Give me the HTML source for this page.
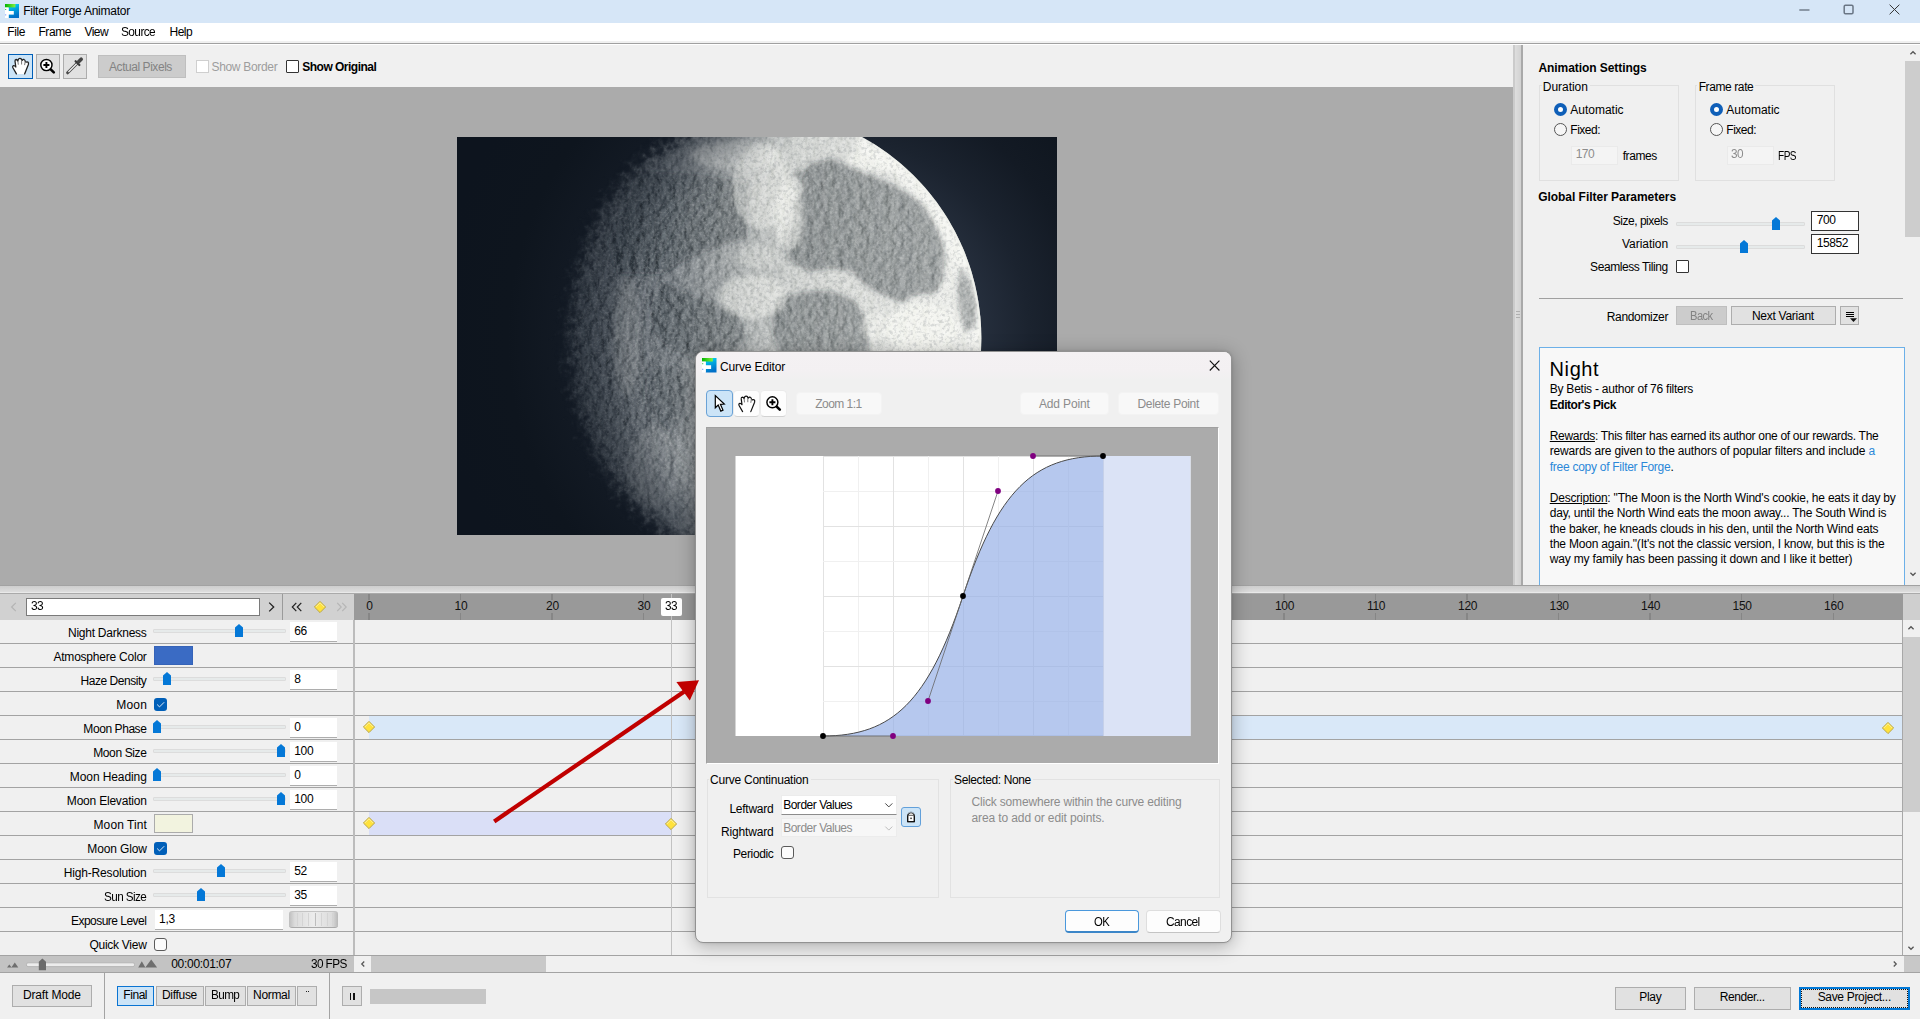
<!DOCTYPE html>
<html>
<head>
<meta charset="utf-8">
<title>Filter Forge Animator</title>
<style>
*{box-sizing:border-box;margin:0;padding:0}
html,body{width:1920px;height:1019px;overflow:hidden;background:#f0f0f0;font-family:"Liberation Sans",sans-serif;font-size:12px;color:#000}
.a{position:absolute}
.t{position:absolute;white-space:nowrap;font-size:12px;color:#000}
svg{display:block;overflow:visible}
</style>
</head>
<body>

<div class="a" style="left:0px;top:0px;width:1920px;height:23px;background:#d6e6f7;"></div>
<svg class="a" style="left:5px;top:4px;" width="14" height="14" viewBox="0 0 14 14"><defs><linearGradient id="iab" x1="0" y1="0" x2="0.3" y2="1"><stop offset="0" stop-color="#00e4ff"/><stop offset="0.45" stop-color="#00a8e0"/><stop offset="1" stop-color="#0070c8"/></linearGradient><linearGradient id="iag" x1="0" y1="0" x2="1" y2="0"><stop offset="0" stop-color="#00b400"/><stop offset="1" stop-color="#86f040"/></linearGradient></defs><rect x="3.6" y="0" width="10.4" height="14" fill="url(#iab)"/><rect x="0" y="0" width="10.4" height="3.4" fill="url(#iag)"/><rect x="0" y="3.6" width="3.6" height="10.4" fill="#fff"/><rect x="0" y="7" width="8.8" height="3.6" fill="#fff"/><rect x="0.2" y="5" width="1" height="1" fill="#30c030"/><rect x="0.2" y="10.4" width="1" height="1" fill="#6080ff"/></svg>
<div class="t" style="left:23.16px;top:4px;line-height:14px;letter-spacing:-0.25px;">Filter Forge Animator</div>
<svg class="a" style="left:1780px;top:0px;" width="140" height="23" viewBox="1780 0 140 23"><path d="M1799.3,10 h10.2" fill="none" stroke="#6a7685" stroke-width="1.4"/><rect x="1844.2" y="5.2" width="8.8" height="8.6" rx="1.2" fill="none" stroke="#6a7685" stroke-width="1.5"/><path d="M1889.6,4.7 l9.8,9.6 M1899.4,4.7 l-9.8,9.6" fill="none" stroke="#333" stroke-width="1"/></svg>
<div class="a" style="left:0px;top:23px;width:1920px;height:18px;background:#fff;"></div>
<div class="a" style="left:0px;top:41px;width:1920px;height:2px;background:#f0f0f0;"></div>
<div class="a" style="left:0px;top:43px;width:1920px;height:1px;background:#a0a0a0;"></div>
<div class="a" style="left:0px;top:44px;width:1920px;height:1px;background:#fff;"></div>
<div class="t" style="left:7.26px;top:24.7px;line-height:14px;letter-spacing:-0.41px;">File</div>
<div class="t" style="left:38.46px;top:24.7px;line-height:14px;letter-spacing:-0.44px;">Frame</div>
<div class="t" style="left:84.46px;top:24.7px;line-height:14px;letter-spacing:-0.53px;">View</div>
<div class="t" style="left:121.46px;top:24.7px;line-height:14px;letter-spacing:-0.6px;transform:scaleX(0.991);transform-origin:0 0;">Source</div>
<div class="t" style="left:169.46px;top:24.7px;line-height:14px;letter-spacing:-0.49px;">Help</div>
<div class="a" style="left:0px;top:45px;width:1513px;height:42px;background:#f0f0f0;"></div>
<div class="a" style="left:8px;top:54px;width:25px;height:25px;background:#cce4f7;border:1px solid #005fb8;"></div>
<div class="a" style="left:36px;top:54px;width:24px;height:25px;background:#e1e1e1;border:1px solid #adadad;"></div>
<div class="a" style="left:63px;top:54px;width:24px;height:25px;background:#e1e1e1;border:1px solid #adadad;"></div>
<svg class="a" style="left:0px;top:44px;" width="100" height="43" viewBox="0 44 100 43"><path d="M16.4,73.9 l-3.5,-6.1 q-0.7,-1.8 0.7,-2.2 q1.3,-0.2 2.2,1.4 l-0.8,-5.8 q-0.1,-1.6 1.2,-1.7 q1.3,0 1.6,1.5 l0.4,-1.2 q0.4,-1.5 1.8,-1.4 q1.5,0.1 1.6,1.6 l0.6,0.4 q0.6,-1.2 1.8,-0.9 q1.3,0.4 1.2,1.9 l0.8,0.8 q1,-0.7 1.9,-0.1 q1,0.8 0.5,2.4 l-3.8,9.4" fill="#fff" stroke="#222" stroke-width="1.3" stroke-linejoin="round" stroke-linecap="round"/><path d="M17.9,61.1 l0.4,3.6 M21.6,60.1 l0,4.4 M25.2,61.5 l-0.6,3.6" fill="none" stroke="#777" stroke-width="1"/><circle cx="46.4" cy="65" r="5.6" fill="#fff" stroke="#000" stroke-width="1.45"/><path d="M43.4,65 h6 M46.4,62 v6" stroke="#000" stroke-width="1.9" fill="none"/><path d="M50.7,69.3 l3.1,3.1" stroke="#000" stroke-width="2.6" stroke-linecap="round" fill="none"/><path d="M67.6,72.8 L77.4,63" stroke="#4a4a4a" stroke-width="3" stroke-linecap="round" fill="none"/><path d="M68.8,71.6 L76.8,63.6" stroke="#fff" stroke-width="1.3" stroke-linecap="round" fill="none"/><path d="M75.6,61.2 L79.4,65" stroke="#3a3a3a" stroke-width="2.2" stroke-linecap="round" fill="none"/><path d="M78.6,61.8 L81.2,59.2" stroke="#444" stroke-width="3.6" stroke-linecap="round" fill="none"/></svg>
<div class="a" style="left:98px;top:55px;width:88px;height:23px;background:#cccccc;border:1px solid #bfbfbf;"></div>
<div class="t" style="left:109.06px;top:60px;line-height:14px;color:#838383;letter-spacing:-0.45px;">Actual Pixels</div>
<div class="a" style="left:195.5px;top:60px;width:13px;height:13px;background:#fff;border:1px solid #cfcfcf;"></div>
<div class="t" style="left:211.46px;top:60px;line-height:14px;color:#9d9d9d;letter-spacing:-0.31px;">Show Border</div>
<div class="a" style="left:286px;top:60px;width:13px;height:13px;background:#fff;border:1px solid #333;border-radius:1px;"></div>
<div class="t" style="left:302.26px;top:60px;line-height:14px;font-weight:bold;letter-spacing:-0.51px;">Show Original</div>
<div class="a" style="left:0px;top:87px;width:1513px;height:498px;background:#ababab;"></div>
<svg class="a" style="left:456.5px;top:137px;overflow:hidden;" width="600" height="398" viewBox="0 0 600 398"><defs><clipPath id="mclip"><circle cx="294.8" cy="201.2" r="229.5"/></clipPath><radialGradient id="glow" gradientUnits="userSpaceOnUse" cx="369.8" cy="201.2" r="390"><stop offset="0" stop-color="#273140"/><stop offset="0.40" stop-color="#252e3c"/><stop offset="0.52" stop-color="#1b232f"/><stop offset="0.66" stop-color="#131a24"/><stop offset="0.82" stop-color="#0e151e"/><stop offset="1" stop-color="#0d141e"/></radialGradient><linearGradient id="lit" gradientUnits="userSpaceOnUse" x1="100" y1="0" x2="530" y2="0"><stop offset="0" stop-color="#262d35"/><stop offset="0.12" stop-color="#394047"/><stop offset="0.25" stop-color="#596066"/><stop offset="0.4" stop-color="#8e9394"/><stop offset="0.55" stop-color="#c6c9c6"/><stop offset="0.8" stop-color="#dee0dc"/><stop offset="1" stop-color="#f2f3ee"/></linearGradient><filter id="blur8" x="-30%" y="-30%" width="160%" height="160%"><feGaussianBlur stdDeviation="2.6"/></filter><filter id="blur12" x="-30%" y="-30%" width="160%" height="160%"><feGaussianBlur stdDeviation="10"/></filter><filter id="rag" x="-10%" y="-10%" width="120%" height="120%"><feGaussianBlur stdDeviation="7" result="b"/><feTurbulence type="fractalNoise" baseFrequency="0.14" numOctaves="3" seed="5" result="t"/><feDisplacementMap in="b" in2="t" scale="30" xChannelSelector="R" yChannelSelector="G"/></filter><filter id="texd" x="0" y="0" width="100%" height="100%"><feTurbulence type="fractalNoise" baseFrequency="0.3" numOctaves="3" seed="11"/><feColorMatrix type="matrix" values="0 0 0 0 0.16  0 0 0 0 0.18  0 0 0 0 0.2  2.6 2.6 0 0 -2.45"/></filter><filter id="texl" x="0" y="0" width="100%" height="100%"><feTurbulence type="fractalNoise" baseFrequency="0.4" numOctaves="3" seed="3"/><feColorMatrix type="matrix" values="0 0 0 0 1  0 0 0 0 1  0 0 0 0 0.97  2.6 2.6 0 0 -2.5"/></filter><filter id="bump" x="0" y="0" width="100%" height="100%" color-interpolation-filters="sRGB"><feTurbulence type="fractalNoise" baseFrequency="0.13" numOctaves="4" seed="4" result="n"/><feDiffuseLighting in="n" surfaceScale="2.2" diffuseConstant="1" lighting-color="#ffffff"><feDistantLight azimuth="5" elevation="50"/></feDiffuseLighting></filter><filter id="blur22" x="-20%" y="-20%" width="140%" height="140%"><feGaussianBlur stdDeviation="20"/></filter><mask id="litmask" maskUnits="userSpaceOnUse" x="0" y="0" width="600" height="398"><g filter="url(#rag)" opacity="0.5"><ellipse cx="294.8" cy="201.2" rx="181" ry="216.5" fill="#fff"/><rect x="294.8" y="-60" width="400" height="560" fill="#fff"/></g><g filter="url(#blur22)"><ellipse cx="294.8" cy="201.2" rx="140" ry="184.5" fill="#fff"/><rect x="294.8" y="-60" width="400" height="560" fill="#fff"/></g></mask></defs><rect width="600" height="398" fill="#0d141e"/><rect width="600" height="398" fill="url(#glow)"/><g clip-path="url(#mclip)"><g mask="url(#litmask)"><rect width="600" height="398" fill="url(#lit)"/><path d="M353,27 L375,21 L395,31 L426,43 L449,55 L469,68 L482,94 L488,117 L486,141 L479,156 L457,158 L445,166 L426,158 L410,150 L395,135 L375,131 L352,135 L332,123 L326,109 L332,94 L340,84 L336,70 L346,52 L344,40 Z" fill="#10161c" opacity="0.42" filter="url(#blur8)"/><path d="M324,160 L352,154 L375,154 L398,164 L410,184 L412,207 L408,250 L330,250 L316,195 L313,176 Z" fill="#10161c" opacity="0.4" filter="url(#blur8)"/><path d="M180,34 L230,36 L293,45 L291,101 L259,110 L203,137 L160,137 L151,106 L169,67 Z" fill="#10161c" opacity="0.36" filter="url(#blur8)"/><path d="M205,144 L241,160 L282,176 L290,203 L275,221 L240,222 L214,214 L196,196 L192,168 Z" fill="#10161c" opacity="0.32" filter="url(#blur8)"/><path d="M188,234 L219,227 L234,250 L230,281 L211,297 L188,273 Z" fill="#10161c" opacity="0.22" filter="url(#blur8)"/><path d="M336,34 l9,-3 l5,6 l-6,5 l-8,-3 z" fill="#10161c" opacity="0.3" filter="url(#blur8)"/><ellipse cx="332" cy="80" rx="14" ry="34" fill="#f3f4ee" opacity="0.55" filter="url(#blur8)"/><ellipse cx="296" cy="160" rx="34" ry="22" fill="#f3f4ee" opacity="0.5" filter="url(#blur8)"/><ellipse cx="465" cy="192" rx="36" ry="26" fill="#f3f4ee" opacity="0.9" filter="url(#blur8)"/><ellipse cx="420" cy="190" rx="16" ry="14" fill="#f3f4ee" opacity="0.5" filter="url(#blur8)"/><ellipse cx="300" cy="120" rx="20" ry="12" fill="#f3f4ee" opacity="0.3" filter="url(#blur8)"/><ellipse cx="425" cy="22" rx="34" ry="12" fill="#f3f4ee" opacity="0.8" filter="url(#blur8)"/><ellipse cx="280" cy="18" rx="46" ry="14" fill="#f3f4ee" opacity="0.5" filter="url(#blur8)"/><ellipse cx="305" cy="50" rx="30" ry="42" fill="#f3f4ee" opacity="0.45" filter="url(#blur8)"/><ellipse cx="170" cy="200" rx="14" ry="60" fill="#f3f4ee" opacity="0.14" filter="url(#blur8)"/><ellipse cx="200" cy="330" rx="30" ry="40" fill="#f3f4ee" opacity="0.12" filter="url(#blur8)"/><path d="M399.73,3.86 A223.5,223.5 0 0 1 509.64,262.8" fill="none" stroke="#f6f7f2" stroke-width="13" opacity="0.8" filter="url(#blur8)"/><path d="M504,129 L514,145 L520,168 L518,191 L508,195 L502,172 L500,148 Z" fill="#10161c" opacity="0.36" filter="url(#blur8)"/><rect width="600" height="398" filter="url(#bump)" style="mix-blend-mode:soft-light" opacity="0.8"/><rect width="600" height="398" filter="url(#texd)" opacity="0.22"/><rect width="600" height="398" filter="url(#texl)" opacity="0.14"/></g></g><path d="M415.89,7.42 A228.5,228.5 0 0 1 518.31,248.71" fill="none" stroke="#f2f3ee" stroke-width="2.2" opacity="0.75"/></svg>
<div class="a" style="left:1513px;top:45px;width:1.5px;height:540px;background:#cbcbcb;"></div>
<div class="a" style="left:1514.5px;top:45px;width:6.5px;height:540px;background:linear-gradient(90deg,#dedede,#d2d2d2);"></div>
<div class="a" style="left:1521px;top:45px;width:2px;height:540px;background:#a9a9a9;"></div>
<div class="a" style="left:1516px;top:311px;width:4px;height:1px;background:#b0b0b0;"></div>
<div class="a" style="left:1516px;top:314px;width:4px;height:1px;background:#b0b0b0;"></div>
<div class="a" style="left:1516px;top:317px;width:4px;height:1px;background:#b0b0b0;"></div>
<div class="a" style="left:1523px;top:45px;width:397px;height:540px;background:#f0f0f0;"></div>
<div class="a" style="left:1905px;top:45px;width:15px;height:540px;background:#f0f0f0;"></div>
<div class="a" style="left:1905px;top:61px;width:15px;height:176px;background:#cdcdcd;"></div>
<svg class="a" style="left:1904.5px;top:45px;" width="16" height="16" viewBox="1904.5 45 16 16"><path d="M1909.9,54.3 l2.6,-2.6 l2.6,2.6" fill="none" stroke="#555" stroke-width="1.25"/></svg>
<svg class="a" style="left:1904.5px;top:566px;" width="16" height="16" viewBox="1904.5 566 16 16"><path d="M1909.9,572.7 l2.6,2.6 l2.6,-2.6" fill="none" stroke="#555" stroke-width="1.25"/></svg>
<div class="t" style="left:1538.46px;top:60.7px;line-height:14px;font-weight:bold;letter-spacing:-0.07px;">Animation Settings</div>
<div class="a" style="left:1538.5px;top:85px;width:140.5px;height:96px;border:1px solid #e0e0e0;"></div>
<div class="a" style="left:1694.5px;top:85px;width:140px;height:96px;border:1px solid #e0e0e0;"></div>
<div class="a" style="left:1541.5px;top:80px;width:48px;height:12px;background:#f0f0f0;"></div>
<div class="t" style="left:1542.86px;top:79.8px;line-height:14px;letter-spacing:-0.05px;">Duration</div>
<div class="a" style="left:1697px;top:80px;width:58px;height:12px;background:#f0f0f0;"></div>
<div class="t" style="left:1698.66px;top:79.8px;line-height:14px;letter-spacing:-0.4px;">Frame rate</div>
<div class="a" style="left:1554.3px;top:102.9px;width:13px;height:13px;background:#fff;border:4.2px solid #0f5fb8;border-radius:50%;"></div>
<div class="t" style="left:1570.36px;top:103px;line-height:14px;letter-spacing:-0.02px;">Automatic</div>
<div class="a" style="left:1554.3px;top:122.5px;width:13px;height:13px;background:#f6f6f6;border:1px solid #555;border-radius:50%;"></div>
<div class="t" style="left:1570.36px;top:122.7px;line-height:14px;letter-spacing:-0.5px;">Fixed:</div>
<div class="a" style="left:1570.7px;top:145.7px;width:47.5px;height:19px;background:#f4f4f4;border:1px solid #eaeaea;"></div>
<div class="a" style="left:1710.3px;top:102.9px;width:13px;height:13px;background:#fff;border:4.2px solid #0f5fb8;border-radius:50%;"></div>
<div class="t" style="left:1726.36px;top:103px;line-height:14px;letter-spacing:-0.02px;">Automatic</div>
<div class="a" style="left:1710.3px;top:122.5px;width:13px;height:13px;background:#f6f6f6;border:1px solid #555;border-radius:50%;"></div>
<div class="t" style="left:1726.36px;top:122.7px;line-height:14px;letter-spacing:-0.5px;">Fixed:</div>
<div class="a" style="left:1726.7px;top:145.7px;width:47.5px;height:19px;background:#f4f4f4;border:1px solid #eaeaea;"></div>
<div class="t" style="left:1575.66px;top:147.3px;line-height:14px;color:#8c8c8c;letter-spacing:-0.46px;">170</div>
<div class="t" style="left:1622.66px;top:148.7px;line-height:14px;letter-spacing:-0.41px;">frames</div>
<div class="t" style="left:1731.06px;top:147.3px;line-height:14px;color:#8c8c8c;letter-spacing:-0.6px;transform:scaleX(0.981);transform-origin:0 0;">30</div>
<div class="t" style="left:1778.26px;top:148.7px;line-height:14px;letter-spacing:-0.6px;transform:scaleX(0.840);transform-origin:0 0;">FPS</div>
<div class="t" style="left:1538.16px;top:189.9px;line-height:14px;font-weight:bold;letter-spacing:-0.03px;">Global Filter Parameters</div>
<div class="t" style="left:1612.86px;top:214.1px;line-height:14px;letter-spacing:-0.49px;">Size, pixels</div>
<div class="a" style="left:1676.3px;top:221.9px;width:128.7px;height:4px;background:#e6eaea;border:1px solid #dcdcdc;border-radius:1px;"></div>
<svg class="a" style="left:1771.8px;top:217px;" width="8" height="13" viewBox="0 0 8 13"><path d="M0,3.38 L4,0 L8,3.38 L8,13 L0,13 Z" fill="#0478d7"/></svg>
<div class="a" style="left:1811px;top:211px;width:48px;height:20px;background:#fff;border:1px solid #333;"></div>
<div class="t" style="left:1816.66px;top:212.8px;line-height:14px;letter-spacing:-0.41px;">700</div>
<div class="t" style="left:1622.06px;top:237px;line-height:14px;letter-spacing:-0.05px;">Variation</div>
<div class="a" style="left:1676.3px;top:244.9px;width:128.7px;height:4px;background:#e6eaea;border:1px solid #dcdcdc;border-radius:1px;"></div>
<svg class="a" style="left:1739.8px;top:240px;" width="8" height="13" viewBox="0 0 8 13"><path d="M0,3.38 L4,0 L8,3.38 L8,13 L0,13 Z" fill="#0478d7"/></svg>
<div class="a" style="left:1811px;top:234px;width:48px;height:20px;background:#fff;border:1px solid #333;"></div>
<div class="t" style="left:1816.66px;top:235.8px;line-height:14px;letter-spacing:-0.42px;">15852</div>
<div class="t" style="left:1590.06px;top:260.4px;line-height:14px;letter-spacing:-0.42px;">Seamless Tiling</div>
<div class="a" style="left:1676px;top:260px;width:13px;height:13px;background:#fff;border:1px solid #333;border-radius:1px;"></div>
<div class="a" style="left:1539px;top:298px;width:1364px;height:1px;background:#a0a0a0;width:364px;"></div>
<div class="t" style="left:1606.76px;top:309.8px;line-height:14px;letter-spacing:-0.34px;">Randomizer</div>
<div class="a" style="left:1676px;top:306px;width:51px;height:19px;background:#cccccc;border:1px solid #bfbfbf;"></div>
<div class="t" style="left:1690.06px;top:309.2px;line-height:14px;color:#838383;letter-spacing:-0.6px;transform:scaleX(0.929);transform-origin:0 0;">Back</div>
<div class="a" style="left:1731px;top:306px;width:105px;height:19px;background:#e1e1e1;border:1px solid #adadad;"></div>
<div class="t" style="left:1751.96px;top:309.2px;line-height:14px;letter-spacing:-0.27px;">Next Variant</div>
<div class="a" style="left:1840px;top:306px;width:19px;height:19px;background:#e1e1e1;border:1px solid #adadad;"></div>
<svg class="a" style="left:1840px;top:306px;" width="19" height="19" viewBox="0 0 19 19"><path d="M6,6.5 h8 M6,8.5 h8 M6,10.5 h8" stroke="#000" stroke-width="1.1" fill="none"/><path d="M10,12.3 h7 l-3.5,3.8 z" fill="#111"/></svg>
<div class="a" style="left:1539px;top:347px;width:366px;height:238px;background:#f8f8f8;border:1px solid #6cb0e8;border-bottom:none;"></div>
<div class="t" style="left:1549.6px;top:357.5px;line-height:22px;font-size:20px;letter-spacing:0.58px;">Night</div>
<div class="t" style="left:1549.76px;top:382.2px;line-height:14px;letter-spacing:-0.24px;">By Betis - author of 76 filters</div>
<div class="t" style="left:1549.76px;top:397.7px;line-height:14px;font-weight:bold;letter-spacing:-0.47px;">Editor's Pick</div>
<div class="t" style="left:1549.76px;top:428.6px;line-height:14px;letter-spacing:-0.31px;"><span style="text-decoration:underline">Rewards</span>: This filter has earned its author one of our rewards. The</div>
<div class="t" style="left:1549.76px;top:444.2px;line-height:14px;letter-spacing:-0.16px;">rewards are given to the authors of popular filters and include <span style="color:#2b88d8">a</span></div>
<div class="t" style="left:1549.76px;top:459.5px;line-height:14px;letter-spacing:-0.27px;"><span style="color:#2b88d8">free copy of Filter Forge</span>.</div>
<div class="t" style="left:1549.76px;top:490.5px;line-height:14px;letter-spacing:-0.22px;"><span style="text-decoration:underline">Description</span>: "The Moon is the North Wind's cookie, he eats it day by</div>
<div class="t" style="left:1549.76px;top:506.1px;line-height:14px;letter-spacing:-0.23px;">day, until the North Wind eats the moon away... The South Wind is</div>
<div class="t" style="left:1549.76px;top:521.6px;line-height:14px;letter-spacing:-0.21px;">the baker, he kneads clouds in his den, until the North Wind eats</div>
<div class="t" style="left:1549.76px;top:537.2px;line-height:14px;letter-spacing:-0.2px;">the Moon again."(It's not the classic version, I know, but this is the</div>
<div class="t" style="left:1549.76px;top:552.4px;line-height:14px;letter-spacing:-0.17px;">way my family has been passing it down and I like it better)</div>
<div class="a" style="left:0px;top:585px;width:1920px;height:1px;background:#a2a2a2;"></div>
<div class="a" style="left:0px;top:586px;width:1920px;height:6px;background:linear-gradient(180deg,#cdcdcd,#dddddd);"></div>
<div class="a" style="left:0px;top:592px;width:1920px;height:1px;background:#e9e9e9;"></div>
<div class="a" style="left:0px;top:593px;width:1920px;height:1px;background:#aaaaaa;"></div>
<div class="a" style="left:0px;top:594px;width:354px;height:26px;background:#d1d1d1;"></div>
<div class="a" style="left:354px;top:594px;width:1549px;height:26px;background:#999999;"></div>
<div class="a" style="left:1903px;top:594px;width:17px;height:26px;background:#cfcfcf;"></div>
<div class="a" style="left:0px;top:620px;width:1903px;height:335px;background:#f0f0f0;"></div>
<div class="a" style="left:369px;top:716px;width:1534px;height:23px;background:#d9e8f8;"></div>
<div class="a" style="left:369px;top:812px;width:302px;height:23px;background:#dadff7;"></div>
<div class="a" style="left:0px;top:643px;width:1903px;height:1px;background:#a3a3a3;"></div>
<div class="a" style="left:0px;top:667px;width:1903px;height:1px;background:#a3a3a3;"></div>
<div class="a" style="left:0px;top:691px;width:1903px;height:1px;background:#a3a3a3;"></div>
<div class="a" style="left:0px;top:715px;width:1903px;height:1px;background:#a3a3a3;"></div>
<div class="a" style="left:0px;top:739px;width:1903px;height:1px;background:#a3a3a3;"></div>
<div class="a" style="left:0px;top:763px;width:1903px;height:1px;background:#a3a3a3;"></div>
<div class="a" style="left:0px;top:787px;width:1903px;height:1px;background:#a3a3a3;"></div>
<div class="a" style="left:0px;top:811px;width:1903px;height:1px;background:#a3a3a3;"></div>
<div class="a" style="left:0px;top:835px;width:1903px;height:1px;background:#a3a3a3;"></div>
<div class="a" style="left:0px;top:859px;width:1903px;height:1px;background:#a3a3a3;"></div>
<div class="a" style="left:0px;top:883px;width:1903px;height:1px;background:#a3a3a3;"></div>
<div class="a" style="left:0px;top:907px;width:1903px;height:1px;background:#a3a3a3;"></div>
<div class="a" style="left:0px;top:931px;width:1903px;height:1px;background:#a3a3a3;"></div>
<div class="a" style="left:0px;top:955px;width:1903px;height:1px;background:#a3a3a3;"></div>
<div class="a" style="left:353.2px;top:620px;width:1.6px;height:335px;background:#bcbcbc;"></div>
<div class="a" style="left:1902px;top:620px;width:1px;height:336px;background:#a8a8a8;"></div>
<div class="a" style="left:368.2px;top:594px;width:1.4px;height:6.3px;background:#868686;"></div>
<div class="a" style="left:368.2px;top:613.2px;width:1.4px;height:6.8px;background:#868686;"></div>
<div class="t" style="left:366.17px;top:598.8px;line-height:14px;color:#111;letter-spacing:-0.26px;">0</div>
<div class="a" style="left:459.72px;top:594px;width:1.4px;height:6.3px;background:#868686;"></div>
<div class="a" style="left:459.72px;top:613.2px;width:1.4px;height:6.8px;background:#868686;"></div>
<div class="t" style="left:454.49px;top:598.8px;line-height:14px;color:#111;letter-spacing:-0.26px;">10</div>
<div class="a" style="left:551.24px;top:594px;width:1.4px;height:6.3px;background:#868686;"></div>
<div class="a" style="left:551.24px;top:613.2px;width:1.4px;height:6.8px;background:#868686;"></div>
<div class="t" style="left:546.01px;top:598.8px;line-height:14px;color:#111;letter-spacing:-0.26px;">20</div>
<div class="a" style="left:642.76px;top:594px;width:1.4px;height:6.3px;background:#868686;"></div>
<div class="a" style="left:642.76px;top:613.2px;width:1.4px;height:6.8px;background:#868686;"></div>
<div class="t" style="left:637.53px;top:598.8px;line-height:14px;color:#111;letter-spacing:-0.26px;">30</div>
<div class="a" style="left:734.28px;top:594px;width:1.4px;height:6.3px;background:#868686;"></div>
<div class="a" style="left:734.28px;top:613.2px;width:1.4px;height:6.8px;background:#868686;"></div>
<div class="a" style="left:825.8px;top:594px;width:1.4px;height:6.3px;background:#868686;"></div>
<div class="a" style="left:825.8px;top:613.2px;width:1.4px;height:6.8px;background:#868686;"></div>
<div class="a" style="left:917.32px;top:594px;width:1.4px;height:6.3px;background:#868686;"></div>
<div class="a" style="left:917.32px;top:613.2px;width:1.4px;height:6.8px;background:#868686;"></div>
<div class="a" style="left:1008.84px;top:594px;width:1.4px;height:6.3px;background:#868686;"></div>
<div class="a" style="left:1008.84px;top:613.2px;width:1.4px;height:6.8px;background:#868686;"></div>
<div class="a" style="left:1100.36px;top:594px;width:1.4px;height:6.3px;background:#868686;"></div>
<div class="a" style="left:1100.36px;top:613.2px;width:1.4px;height:6.8px;background:#868686;"></div>
<div class="a" style="left:1191.88px;top:594px;width:1.4px;height:6.3px;background:#868686;"></div>
<div class="a" style="left:1191.88px;top:613.2px;width:1.4px;height:6.8px;background:#868686;"></div>
<div class="a" style="left:1283.4px;top:594px;width:1.4px;height:6.3px;background:#868686;"></div>
<div class="a" style="left:1283.4px;top:613.2px;width:1.4px;height:6.8px;background:#868686;"></div>
<div class="t" style="left:1274.96px;top:598.8px;line-height:14px;color:#111;letter-spacing:-0.26px;">100</div>
<div class="a" style="left:1374.92px;top:594px;width:1.4px;height:6.3px;background:#868686;"></div>
<div class="a" style="left:1374.92px;top:613.2px;width:1.4px;height:6.8px;background:#868686;"></div>
<div class="t" style="left:1366.93px;top:598.8px;line-height:14px;color:#111;letter-spacing:-0.26px;">110</div>
<div class="a" style="left:1466.44px;top:594px;width:1.4px;height:6.3px;background:#868686;"></div>
<div class="a" style="left:1466.44px;top:613.2px;width:1.4px;height:6.8px;background:#868686;"></div>
<div class="t" style="left:1458px;top:598.8px;line-height:14px;color:#111;letter-spacing:-0.26px;">120</div>
<div class="a" style="left:1557.96px;top:594px;width:1.4px;height:6.3px;background:#868686;"></div>
<div class="a" style="left:1557.96px;top:613.2px;width:1.4px;height:6.8px;background:#868686;"></div>
<div class="t" style="left:1549.52px;top:598.8px;line-height:14px;color:#111;letter-spacing:-0.26px;">130</div>
<div class="a" style="left:1649.48px;top:594px;width:1.4px;height:6.3px;background:#868686;"></div>
<div class="a" style="left:1649.48px;top:613.2px;width:1.4px;height:6.8px;background:#868686;"></div>
<div class="t" style="left:1641.04px;top:598.8px;line-height:14px;color:#111;letter-spacing:-0.26px;">140</div>
<div class="a" style="left:1741px;top:594px;width:1.4px;height:6.3px;background:#868686;"></div>
<div class="a" style="left:1741px;top:613.2px;width:1.4px;height:6.8px;background:#868686;"></div>
<div class="t" style="left:1732.56px;top:598.8px;line-height:14px;color:#111;letter-spacing:-0.26px;">150</div>
<div class="a" style="left:1832.52px;top:594px;width:1.4px;height:6.3px;background:#868686;"></div>
<div class="a" style="left:1832.52px;top:613.2px;width:1.4px;height:6.8px;background:#868686;"></div>
<div class="t" style="left:1824.08px;top:598.8px;line-height:14px;color:#111;letter-spacing:-0.26px;">160</div>
<div class="a" style="left:671.2px;top:594px;width:1.3px;height:361px;background:#c2c2c2;"></div>
<div class="a" style="left:660.5px;top:598px;width:21px;height:18px;background:#fff;border-radius:2px;"></div>
<div class="t" style="left:664.96px;top:598.8px;line-height:14px;letter-spacing:-0.6px;transform:scaleX(0.981);transform-origin:0 0;">33</div>
<svg class="a" style="left:0px;top:594px;" width="354" height="26" viewBox="0 594 354 26"><path d="M15.8,602.8 l-4.2,4.2 l4.2,4.2" fill="none" stroke="#b4b4b4" stroke-width="1.2"/><path d="M269.2,602.6 l4.5,4.4 l-4.5,4.4" fill="none" stroke="#222" stroke-width="1.3"/><path d="M296.3,602.8 l-4,4.2 l4,4.2 M301.3,602.8 l-4,4.2 l4,4.2" fill="none" stroke="#222" stroke-width="1.2"/><path d="M337.2,602.8 l4,4.2 l-4,4.2 M342.2,602.8 l4,4.2 l-4,4.2" fill="none" stroke="#b6b6b6" stroke-width="1.2"/></svg>
<div class="a" style="left:25.5px;top:598px;width:234px;height:18px;background:#fff;border:1px solid #7a7a7a;"></div>
<div class="t" style="left:31.06px;top:598.8px;line-height:14px;letter-spacing:-0.6px;transform:scaleX(0.996);transform-origin:0 0;">33</div>
<div class="a" style="left:281.5px;top:594px;width:1.5px;height:26px;background:#9a9a9a;"></div>
<svg class="a" style="left:312px;top:599px;" width="16" height="16" viewBox="312 599 16 16"><path d="M314.4,607 l5.6,-5.6 l5.6,5.6 l-5.6,5.6 z" fill="#ffe23c" stroke="#b9a64a" stroke-width="1"/><path d="M315.8,607 l4.2,-4.2 l4.2,4.2" fill="none" stroke="#fff6b0" stroke-width="1" opacity="0.8"/></svg>
<div class="t" style="left:67.96px;top:625.5px;line-height:14px;letter-spacing:-0.24px;">Night Darkness</div>
<div class="a" style="left:153px;top:629.2px;width:132.5px;height:4px;background:#e6eaea;border:1px solid #dcdcdc;border-radius:1px;"></div>
<svg class="a" style="left:235px;top:623.8px;" width="8" height="13" viewBox="0 0 8 13"><path d="M0,3.38 L4,0 L8,3.38 L8,13 L0,13 Z" fill="#0478d7"/></svg>
<div class="a" style="left:290px;top:622px;width:47px;height:19.5px;background:#fff;border-bottom:1px solid #adadad;"></div>
<div class="t" style="left:294.16px;top:623.5px;line-height:14px;letter-spacing:-0.26px;">66</div>
<div class="t" style="left:53.46px;top:649.5px;line-height:14px;letter-spacing:-0.22px;">Atmosphere Color</div>
<div class="a" style="left:154.3px;top:646px;width:38.5px;height:19px;background:#3a6bc4;border:1px solid #3563b8;"></div>
<div class="t" style="left:80.46px;top:673.5px;line-height:14px;letter-spacing:-0.45px;">Haze Density</div>
<div class="a" style="left:153px;top:677.2px;width:132.5px;height:4px;background:#e6eaea;border:1px solid #dcdcdc;border-radius:1px;"></div>
<svg class="a" style="left:163.4px;top:671.8px;" width="8" height="13" viewBox="0 0 8 13"><path d="M0,3.38 L4,0 L8,3.38 L8,13 L0,13 Z" fill="#0478d7"/></svg>
<div class="a" style="left:290px;top:670px;width:47px;height:19.5px;background:#fff;border-bottom:1px solid #adadad;"></div>
<div class="t" style="left:294.16px;top:671.5px;line-height:14px;letter-spacing:-0.26px;">8</div>
<div class="t" style="left:116.16px;top:697.5px;line-height:14px;letter-spacing:0.23px;">Moon</div>
<div class="a" style="left:154.3px;top:698px;width:13.2px;height:13.2px;background:#005fb8;border-radius:3px;"></div>
<svg class="a" style="left:154.3px;top:698px;" width="13" height="13" viewBox="0 0 13 13"><path d="M3.4,6.8 l2.1,2.1 l4.4,-4.4" fill="none" stroke="#dbe9f7" stroke-width="1" stroke-linecap="round" stroke-linejoin="round"/></svg>
<div class="t" style="left:83.36px;top:721.5px;line-height:14px;letter-spacing:-0.43px;">Moon Phase</div>
<div class="a" style="left:153px;top:725.2px;width:132.5px;height:4px;background:#e6eaea;border:1px solid #dcdcdc;border-radius:1px;"></div>
<svg class="a" style="left:153.3px;top:719.8px;" width="8" height="13" viewBox="0 0 8 13"><path d="M0,3.38 L4,0 L8,3.38 L8,13 L0,13 Z" fill="#0478d7"/></svg>
<div class="a" style="left:290px;top:718px;width:47px;height:19.5px;background:#fff;border-bottom:1px solid #adadad;"></div>
<div class="t" style="left:294.16px;top:719.5px;line-height:14px;letter-spacing:-0.26px;">0</div>
<div class="t" style="left:93.16px;top:745.5px;line-height:14px;letter-spacing:-0.37px;">Moon Size</div>
<div class="a" style="left:153px;top:749.2px;width:132.5px;height:4px;background:#e6eaea;border:1px solid #dcdcdc;border-radius:1px;"></div>
<svg class="a" style="left:277px;top:743.8px;" width="8" height="13" viewBox="0 0 8 13"><path d="M0,3.38 L4,0 L8,3.38 L8,13 L0,13 Z" fill="#0478d7"/></svg>
<div class="a" style="left:290px;top:742px;width:47px;height:19.5px;background:#fff;border-bottom:1px solid #adadad;"></div>
<div class="t" style="left:294.16px;top:743.5px;line-height:14px;letter-spacing:-0.26px;">100</div>
<div class="t" style="left:69.86px;top:769.5px;line-height:14px;letter-spacing:-0.1px;">Moon Heading</div>
<div class="a" style="left:153px;top:773.2px;width:132.5px;height:4px;background:#e6eaea;border:1px solid #dcdcdc;border-radius:1px;"></div>
<svg class="a" style="left:153.3px;top:767.8px;" width="8" height="13" viewBox="0 0 8 13"><path d="M0,3.38 L4,0 L8,3.38 L8,13 L0,13 Z" fill="#0478d7"/></svg>
<div class="a" style="left:290px;top:766px;width:47px;height:19.5px;background:#fff;border-bottom:1px solid #adadad;"></div>
<div class="t" style="left:294.16px;top:767.5px;line-height:14px;letter-spacing:-0.26px;">0</div>
<div class="t" style="left:66.86px;top:793.5px;line-height:14px;letter-spacing:-0.21px;">Moon Elevation</div>
<div class="a" style="left:153px;top:797.2px;width:132.5px;height:4px;background:#e6eaea;border:1px solid #dcdcdc;border-radius:1px;"></div>
<svg class="a" style="left:277px;top:791.8px;" width="8" height="13" viewBox="0 0 8 13"><path d="M0,3.38 L4,0 L8,3.38 L8,13 L0,13 Z" fill="#0478d7"/></svg>
<div class="a" style="left:290px;top:790px;width:47px;height:19.5px;background:#fff;border-bottom:1px solid #adadad;"></div>
<div class="t" style="left:294.16px;top:791.5px;line-height:14px;letter-spacing:-0.26px;">100</div>
<div class="t" style="left:93.56px;top:817.5px;line-height:14px;letter-spacing:0.08px;">Moon Tint</div>
<div class="a" style="left:154.3px;top:814px;width:38.5px;height:19px;background:#f2f3df;border:1px solid #ababab;"></div>
<div class="t" style="left:87.36px;top:841.5px;line-height:14px;letter-spacing:-0.15px;">Moon Glow</div>
<div class="a" style="left:154.3px;top:842px;width:13.2px;height:13.2px;background:#005fb8;border-radius:3px;"></div>
<svg class="a" style="left:154.3px;top:842px;" width="13" height="13" viewBox="0 0 13 13"><path d="M3.4,6.8 l2.1,2.1 l4.4,-4.4" fill="none" stroke="#dbe9f7" stroke-width="1" stroke-linecap="round" stroke-linejoin="round"/></svg>
<div class="t" style="left:63.66px;top:865.5px;line-height:14px;letter-spacing:-0.16px;">High-Resolution</div>
<div class="a" style="left:153px;top:869.2px;width:132.5px;height:4px;background:#e6eaea;border:1px solid #dcdcdc;border-radius:1px;"></div>
<svg class="a" style="left:217.3px;top:863.8px;" width="8" height="13" viewBox="0 0 8 13"><path d="M0,3.38 L4,0 L8,3.38 L8,13 L0,13 Z" fill="#0478d7"/></svg>
<div class="a" style="left:290px;top:862px;width:47px;height:19.5px;background:#fff;border-bottom:1px solid #adadad;"></div>
<div class="t" style="left:294.16px;top:863.5px;line-height:14px;letter-spacing:-0.26px;">52</div>
<div class="t" style="left:104.06px;top:889.5px;line-height:14px;letter-spacing:-0.6px;transform:scaleX(0.977);transform-origin:0 0;">Sun Size</div>
<div class="a" style="left:153px;top:893.2px;width:132.5px;height:4px;background:#e6eaea;border:1px solid #dcdcdc;border-radius:1px;"></div>
<svg class="a" style="left:196.5px;top:887.8px;" width="8" height="13" viewBox="0 0 8 13"><path d="M0,3.38 L4,0 L8,3.38 L8,13 L0,13 Z" fill="#0478d7"/></svg>
<div class="a" style="left:290px;top:886px;width:47px;height:19.5px;background:#fff;border-bottom:1px solid #adadad;"></div>
<div class="t" style="left:294.16px;top:887.5px;line-height:14px;letter-spacing:-0.26px;">35</div>
<div class="t" style="left:70.96px;top:913.5px;line-height:14px;letter-spacing:-0.52px;">Exposure Level</div>
<div class="a" style="left:155px;top:910px;width:128px;height:19.5px;background:#fff;border-bottom:1px solid #adadad;"></div>
<div class="t" style="left:159.06px;top:912px;line-height:14px;letter-spacing:-0.26px;">1,3</div>
<div class="a" style="left:289.3px;top:911.3px;width:48.7px;height:16.5px;background:linear-gradient(90deg,#bdbdbd 0%,#dcdcdc 12%,#ececec 50%,#dcdcdc 88%,#b8b8b8 100%);border-radius:3px;border-top:1px solid #c4c4c4;border-bottom:1px solid #aaa;"></div>
<div class="a" style="left:297px;top:913px;width:1px;height:13px;background:#d4d4d4;"></div>
<div class="a" style="left:302px;top:913px;width:1px;height:13px;background:#d4d4d4;"></div>
<div class="a" style="left:308px;top:913px;width:1px;height:13px;background:#d4d4d4;"></div>
<div class="a" style="left:314.5px;top:913px;width:1px;height:13px;background:#bdbdbd;"></div>
<div class="a" style="left:321px;top:913px;width:1px;height:13px;background:#d4d4d4;"></div>
<div class="a" style="left:327px;top:913px;width:1px;height:13px;background:#d4d4d4;"></div>
<div class="a" style="left:332px;top:913px;width:1px;height:13px;background:#d4d4d4;"></div>
<div class="t" style="left:89.46px;top:937.5px;line-height:14px;letter-spacing:-0.27px;">Quick View</div>
<div class="a" style="left:154.3px;top:938px;width:13px;height:13px;background:#fbfbfb;border:1px solid #5a5a5a;border-radius:3px;"></div>
<svg class="a" style="left:361.3px;top:718.8px;" width="16" height="16" viewBox="361.3 718.8 16 16"><path d="M363.7,726.8 l5.6,-5.6 l5.6,5.6 l-5.6,5.6 z" fill="#ffe23c" stroke="#b9a64a" stroke-width="1"/><path d="M365.1,726.8 l4.2,-4.2 l4.2,4.2" fill="none" stroke="#fff6b0" stroke-width="1" opacity="0.8"/></svg>
<svg class="a" style="left:1880.3px;top:719.6px;" width="16" height="16" viewBox="1880.3 719.6 16 16"><path d="M1882.7,727.6 l5.6,-5.6 l5.6,5.6 l-5.6,5.6 z" fill="#ffe23c" stroke="#b9a64a" stroke-width="1"/><path d="M1884.1,727.6 l4.2,-4.2 l4.2,4.2" fill="none" stroke="#fff6b0" stroke-width="1" opacity="0.8"/></svg>
<svg class="a" style="left:361.3px;top:814.8px;" width="16" height="16" viewBox="361.3 814.8 16 16"><path d="M363.7,822.8 l5.6,-5.6 l5.6,5.6 l-5.6,5.6 z" fill="#ffe23c" stroke="#b9a64a" stroke-width="1"/><path d="M365.1,822.8 l4.2,-4.2 l4.2,4.2" fill="none" stroke="#fff6b0" stroke-width="1" opacity="0.8"/></svg>
<svg class="a" style="left:663.3px;top:815.7px;" width="16" height="16" viewBox="663.3 815.7 16 16"><path d="M665.7,823.7 l5.6,-5.6 l5.6,5.6 l-5.6,5.6 z" fill="#ffe23c" stroke="#b9a64a" stroke-width="1"/><path d="M667.1,823.7 l4.2,-4.2 l4.2,4.2" fill="none" stroke="#fff6b0" stroke-width="1" opacity="0.8"/></svg>
<div class="a" style="left:1903px;top:620px;width:17px;height:335px;background:#f0f0f0;"></div>
<div class="a" style="left:1903px;top:636.5px;width:17px;height:175px;background:#cdcdcd;"></div>
<svg class="a" style="left:1903.3px;top:620px;" width="16" height="16" viewBox="1903.3 620 16 16"><path d="M1908.7,629.3 l2.6,-2.6 l2.6,2.6" fill="none" stroke="#555" stroke-width="1.25"/></svg>
<svg class="a" style="left:1903.3px;top:939.5px;" width="16" height="16" viewBox="1903.3 939.5 16 16"><path d="M1908.7,946.2 l2.6,2.6 l2.6,-2.6" fill="none" stroke="#555" stroke-width="1.25"/></svg>
<div class="a" style="left:0px;top:955px;width:1920px;height:1px;background:#a3a3a3;"></div>
<div class="a" style="left:0px;top:956px;width:354px;height:16.5px;background:#c3c3c3;"></div>
<div class="a" style="left:354px;top:956px;width:1549px;height:16.5px;background:#f0f0f0;"></div>
<div class="a" style="left:371px;top:956px;width:175.3px;height:16.5px;background:#c8c8c8;"></div>
<div class="a" style="left:1904px;top:956px;width:16px;height:16px;background:#c8c8c8;"></div>
<div class="a" style="left:0px;top:972.3px;width:1920px;height:1px;background:#a3a3a3;"></div>
<svg class="a" style="left:354.8px;top:956px;" width="16" height="16" viewBox="354.8 956 16 16"><path d="M364.05,961.5 l-2.5,2.5 l2.5,2.5" fill="none" stroke="#555" stroke-width="1.25"/></svg>
<svg class="a" style="left:1887px;top:956px;" width="16" height="16" viewBox="1887 956 16 16"><path d="M1893.75,961.5 l2.5,2.5 l-2.5,2.5" fill="none" stroke="#555" stroke-width="1.25"/></svg>
<svg class="a" style="left:0px;top:955px;" width="354" height="18" viewBox="0 955 354 18"><path d="M7,967.6 l2.3,-3 l2.3,3 z M11.3,967.6 l3.5,-5.2 l3.5,5.2 z" fill="#6e6e6e"/><rect x="26.5" y="962.8" width="108" height="3.8" rx="1.5" fill="#ececec" stroke="#adadad" stroke-width="0.8"/><path d="M38.8,970.3 v-8.6 l3.6,-3.2 l3.6,3.2 v8.6 z" fill="#6b6b6b"/><path d="M138.2,967.6 l3.6,-6.3 l3.6,6.3 z M145.3,967.6 l5.9,-8 l5.9,8 z" fill="#6e6e6e"/></svg>
<div class="t" style="left:171.26px;top:957px;line-height:14px;letter-spacing:-0.3px;">00:00:01:07</div>
<div class="t" style="left:311.46px;top:957px;line-height:14px;letter-spacing:-0.6px;transform:scaleX(0.981);transform-origin:0 0;">30 FPS</div>
<div class="a" style="left:0px;top:973.3px;width:1920px;height:46px;background:#f0f0f0;"></div>
<div class="a" style="left:104.3px;top:973px;width:1px;height:46px;background:#a3a3a3;"></div>
<div class="a" style="left:329.3px;top:973px;width:1px;height:46px;background:#a3a3a3;"></div>
<div class="a" style="left:12px;top:985px;width:80px;height:22px;background:#e1e1e1;border:1px solid #adadad;"></div>
<div class="t" style="left:22.96px;top:988px;line-height:14px;letter-spacing:-0.15px;">Draft Mode</div>
<div class="a" style="left:117px;top:986px;width:37px;height:20px;background:#cce4f7;border:1px solid #0a74d2;"></div>
<div class="t" style="left:123.26px;top:988px;line-height:14px;letter-spacing:-0.43px;">Final</div>
<div class="a" style="left:155.5px;top:986px;width:48px;height:20px;background:#e1e1e1;border:1px solid #adadad;"></div>
<div class="t" style="left:161.96px;top:988px;line-height:14px;letter-spacing:-0.3px;">Diffuse</div>
<div class="a" style="left:205.3px;top:986px;width:40.3px;height:20px;background:#e1e1e1;border:1px solid #adadad;"></div>
<div class="t" style="left:211.06px;top:988px;line-height:14px;letter-spacing:-0.6px;transform:scaleX(0.978);transform-origin:0 0;">Bump</div>
<div class="a" style="left:247.3px;top:986px;width:48.4px;height:20px;background:#e1e1e1;border:1px solid #adadad;"></div>
<div class="t" style="left:253.06px;top:988px;line-height:14px;letter-spacing:-0.33px;">Normal</div>
<div class="a" style="left:297.4px;top:986px;width:19.5px;height:20px;background:#e1e1e1;border:1px solid #adadad;"></div>
<div class="a" style="left:305.5px;top:991.3px;width:1px;height:1px;background:#222;"></div>
<div class="a" style="left:308.3px;top:991.3px;width:1px;height:1px;background:#222;"></div>
<div class="a" style="left:342.2px;top:986px;width:20px;height:20px;background:#e1e1e1;border:1px solid #adadad;"></div>
<div class="a" style="left:349.6px;top:992.5px;width:1.8px;height:7px;background:#111;"></div>
<div class="a" style="left:352.8px;top:992.5px;width:1.8px;height:7px;background:#111;"></div>
<div class="a" style="left:370px;top:989px;width:115.5px;height:14.5px;background:#c6c6c6;"></div>
<div class="a" style="left:1615px;top:987px;width:71px;height:23px;background:#e1e1e1;border:1px solid #adadad;"></div>
<div class="t" style="left:1639.26px;top:989.8px;line-height:14px;letter-spacing:-0.31px;">Play</div>
<div class="a" style="left:1694px;top:987px;width:97px;height:23px;background:#e1e1e1;border:1px solid #adadad;"></div>
<div class="t" style="left:1719.86px;top:989.8px;line-height:14px;letter-spacing:-0.44px;">Render...</div>
<div class="a" style="left:1799px;top:987px;width:111px;height:23px;background:#e1e1e1;border:2px solid #0078d7;"></div>
<div class="a" style="left:1801px;top:989px;width:107px;height:19px;border:1px dotted #111;"></div>
<div class="t" style="left:1817.66px;top:989.8px;line-height:14px;letter-spacing:-0.32px;">Save Project...</div>
<div class="a" style="left:694.6px;top:351.3px;width:537px;height:592px;background:#f0f0f0;border-radius:8px;border:1px solid #929292;box-shadow:0 3px 18px 1px rgba(0,0,0,0.27),0 0 3px rgba(0,0,0,0.12);overflow:hidden;"></div>
<div class="a" style="left:696px;top:352.3px;width:534.5px;height:28px;background:linear-gradient(180deg,#f4f1f3 0%,#f3f0f2 70%,#f0f0f0 100%);border-radius:7px 7px 0 0;"></div>
<svg class="a" style="left:702px;top:358px;" width="14.5" height="14.5" viewBox="0 0 14 14"><defs><linearGradient id="ibb" x1="0" y1="0" x2="0.3" y2="1"><stop offset="0" stop-color="#00e4ff"/><stop offset="0.45" stop-color="#00a8e0"/><stop offset="1" stop-color="#0070c8"/></linearGradient><linearGradient id="ibg" x1="0" y1="0" x2="1" y2="0"><stop offset="0" stop-color="#00b400"/><stop offset="1" stop-color="#86f040"/></linearGradient></defs><rect x="3.6" y="0" width="10.4" height="14" fill="url(#ibb)"/><rect x="0" y="0" width="10.4" height="3.4" fill="url(#ibg)"/><rect x="0" y="3.6" width="3.6" height="10.4" fill="#fff"/><rect x="0" y="7" width="8.8" height="3.6" fill="#fff"/><rect x="0.2" y="5" width="1" height="1" fill="#30c030"/><rect x="0.2" y="10.4" width="1" height="1" fill="#6080ff"/></svg>
<div class="t" style="left:719.96px;top:359.6px;line-height:14px;letter-spacing:-0.12px;">Curve Editor</div>
<svg class="a" style="left:1205px;top:356px;" width="20" height="20" viewBox="1205 356 20 20"><path d="M1209.8,360.7 l9.6,9.8 M1219.4,360.7 l-9.6,9.8" stroke="#111" stroke-width="1.1" fill="none"/></svg>
<div class="a" style="left:706px;top:390px;width:27px;height:27px;background:#cce4f7;border:1px solid #6aa2d6;border-radius:4px;"></div>
<div class="a" style="left:733.3px;top:390.3px;width:26.6px;height:26.6px;background:#fdfdfd;border:1px solid #ebebeb;border-bottom-color:#d2d2d2;border-radius:4.5px;"></div>
<div class="a" style="left:760.2px;top:390.3px;width:26.6px;height:26.6px;background:#fdfdfd;border:1px solid #ebebeb;border-bottom-color:#d2d2d2;border-radius:4.5px;"></div>
<svg class="a" style="left:700px;top:385px;" width="100" height="40" viewBox="700 385 100 40"><path d="M715.3,395.6 v12.2 l2.9,-2.7 l2.6,6 l2.2,-1 l-2.6,-5.8 l3.9,-0.3 z" fill="#fff" stroke="#000" stroke-width="1.2" stroke-linejoin="miter"/><path d="M742.6,411.6 l-3.5,-6.1 q-0.7,-1.8 0.7,-2.2 q1.3,-0.2 2.2,1.4 l-0.8,-5.8 q-0.1,-1.6 1.2,-1.7 q1.3,0 1.6,1.5 l0.4,-1.2 q0.4,-1.5 1.8,-1.4 q1.5,0.1 1.6,1.6 l0.6,0.4 q0.6,-1.2 1.8,-0.9 q1.3,0.4 1.2,1.9 l0.8,0.8 q1,-0.7 1.9,-0.1 q1,0.8 0.5,2.4 l-3.8,9.4" fill="#fff" stroke="#111" stroke-width="1.2" stroke-linejoin="round" stroke-linecap="round"/><path d="M744.1,398.8 l0.4,3.6 M747.8,397.8 l0,4.4 M751.4,399.2 l-0.6,3.6" fill="none" stroke="#777" stroke-width="1"/><circle cx="772.4" cy="402.3" r="5.5" fill="#fff" stroke="#000" stroke-width="1.45"/><path d="M769.4,402.3 h6 M772.4,399.3 v6" stroke="#000" stroke-width="1.9" fill="none"/><path d="M776.7,406.6 l3.1,3.1" stroke="#000" stroke-width="2.6" stroke-linecap="round" fill="none"/></svg>
<div class="a" style="left:796px;top:392px;width:86px;height:23px;background:#f8f8f8;border-radius:4px;border:1px solid #f3f3f3;"></div>
<div class="t" style="left:815.16px;top:396.5px;line-height:14px;color:#8c8c8c;letter-spacing:-0.51px;">Zoom 1:1</div>
<div class="a" style="left:1020px;top:392px;width:89px;height:23px;background:#f8f8f8;border-radius:4px;border:1px solid #f3f3f3;"></div>
<div class="t" style="left:1038.96px;top:396.5px;line-height:14px;color:#8c8c8c;letter-spacing:-0.15px;">Add Point</div>
<div class="a" style="left:1118px;top:392px;width:101px;height:23px;background:#f8f8f8;border-radius:4px;border:1px solid #f3f3f3;"></div>
<div class="t" style="left:1137.46px;top:396.5px;line-height:14px;color:#8c8c8c;letter-spacing:-0.32px;">Delete Point</div>
<div class="a" style="left:706.3px;top:427.3px;width:513px;height:336.5px;background:#ababab;border-left:1px solid #a0a0a0;border-top:1px solid #a0a0a0;border-right:1px solid #fff;border-bottom:1px solid #fff;"></div>
<svg class="a" style="left:706px;top:427px;" width="513" height="337" viewBox="706 427 513 337"><rect x="735.5" y="456" width="455" height="280" fill="#fff"/><path d="M823.5,456 V736" stroke="#e2e2e2" stroke-width="1"/><path d="M823,456.5 H1103" stroke="#e2e2e2" stroke-width="1"/><path d="M858.5,456 V736" stroke="#f0f0f0" stroke-width="1"/><path d="M823,491.5 H1103" stroke="#f0f0f0" stroke-width="1"/><path d="M893.5,456 V736" stroke="#e2e2e2" stroke-width="1"/><path d="M823,526.5 H1103" stroke="#e2e2e2" stroke-width="1"/><path d="M928.5,456 V736" stroke="#f0f0f0" stroke-width="1"/><path d="M823,561.5 H1103" stroke="#f0f0f0" stroke-width="1"/><path d="M963.5,456 V736" stroke="#e2e2e2" stroke-width="1"/><path d="M823,596.5 H1103" stroke="#e2e2e2" stroke-width="1"/><path d="M998.5,456 V736" stroke="#f0f0f0" stroke-width="1"/><path d="M823,631.5 H1103" stroke="#f0f0f0" stroke-width="1"/><path d="M1033.5,456 V736" stroke="#e2e2e2" stroke-width="1"/><path d="M823,666.5 H1103" stroke="#e2e2e2" stroke-width="1"/><path d="M1068.5,456 V736" stroke="#f0f0f0" stroke-width="1"/><path d="M823,701.5 H1103" stroke="#f0f0f0" stroke-width="1"/><path d="M1103.5,456 V736" stroke="#e2e2e2" stroke-width="1"/><path d="M823,735.5 H1103" stroke="#e2e2e2" stroke-width="1"/><rect x="1103.5" y="456" width="87" height="280" fill="#dbe3f6"/><path d="M823,736 C893,736 928,701 963,596 C998,491 1033,456 1103,456 L1103.5,456 L1103.5,736 Z" fill="#94aee6" fill-opacity="0.68"/><path d="M823,736 C893,736 928,701 963,596 C998,491 1033,456 1103,456" fill="none" stroke="#4a4a4a" stroke-width="1"/><path d="M823,736 H893 M928,701 L998,491 M1033,456 H1103" fill="none" stroke="#666" stroke-width="0.8"/><circle cx="893" cy="736" r="2.9" fill="#800080"/><circle cx="928" cy="701" r="2.9" fill="#800080"/><circle cx="998" cy="491" r="2.9" fill="#800080"/><circle cx="1033" cy="456" r="2.9" fill="#800080"/><circle cx="823" cy="736" r="2.9" fill="#000"/><circle cx="963" cy="596" r="2.9" fill="#000"/><circle cx="1103" cy="456" r="2.9" fill="#000"/></svg>
<div class="a" style="left:706.5px;top:779.2px;width:232px;height:119.3px;border:1px solid #e2e2e2;"></div>
<div class="a" style="left:950.3px;top:779.2px;width:269.3px;height:119.3px;border:1px solid #e2e2e2;"></div>
<div class="a" style="left:708.5px;top:774px;width:102px;height:12px;background:#f0f0f0;"></div>
<div class="t" style="left:710.06px;top:773.3px;line-height:14px;letter-spacing:-0.24px;">Curve Continuation</div>
<div class="a" style="left:952.5px;top:774px;width:80.5px;height:12px;background:#f0f0f0;"></div>
<div class="t" style="left:954.06px;top:773.3px;line-height:14px;letter-spacing:-0.37px;">Selected: None</div>
<div class="t" style="left:729.46px;top:801.6px;line-height:14px;letter-spacing:-0.26px;">Leftward</div>
<div class="a" style="left:781.2px;top:795px;width:115.6px;height:19.6px;background:#fff;border:1px solid #ececec;border-bottom:1px solid #8c8c8c;"></div>
<div class="t" style="left:783.16px;top:798.4px;line-height:14px;letter-spacing:-0.48px;">Border Values</div>
<div class="t" style="left:721.06px;top:824.5px;line-height:14px;letter-spacing:-0.18px;">Rightward</div>
<div class="a" style="left:781.2px;top:818.2px;width:115.6px;height:19.3px;background:#f7f7f7;border:1px solid #ececec;"></div>
<div class="t" style="left:783.16px;top:821.4px;line-height:14px;color:#8c8c8c;letter-spacing:-0.48px;">Border Values</div>
<svg class="a" style="left:880px;top:795px;" width="20" height="45" viewBox="880 795 20 45"><path d="M885.3,803.4 l3.5,3.5 l3.5,-3.5" fill="none" stroke="#444" stroke-width="1"/><path d="M885.3,826.6 l3.5,3.5 l3.5,-3.5" fill="none" stroke="#bdbdbd" stroke-width="1"/></svg>
<div class="a" style="left:901px;top:807px;width:20px;height:20px;background:#cce4f7;border:1px solid #62a0da;border-radius:3px;"></div>
<svg class="a" style="left:901px;top:807px;" width="20" height="20" viewBox="0 0 20 20"><path d="M6.7,14.6 V9.4 a3.3,3.9 0 0 1 6.6,0 V14.6 Z" fill="#fff" stroke="#111" stroke-width="1.4" stroke-linejoin="round"/><path d="M7,8.3 h6" stroke="#555" stroke-width="1" fill="none"/><rect x="9.3" y="10.6" width="1.5" height="1.5" fill="#333"/><path d="M6.2,14.6 h7.6" stroke="#111" stroke-width="1.2"/><path d="M7.6,6.6 a2.5,2.2 0 0 1 4.8,0" stroke="#cfe3f5" stroke-width="0.9" fill="none"/></svg>
<div class="t" style="left:732.96px;top:847.3px;line-height:14px;letter-spacing:-0.35px;">Periodic</div>
<div class="a" style="left:781.2px;top:846.2px;width:13px;height:13px;background:#fbfbfb;border:1px solid #5a5a5a;border-radius:3px;"></div>
<div class="t" style="left:971.46px;top:795.3px;line-height:14px;color:#8c8c8c;letter-spacing:-0.17px;">Click somewhere within the curve editing</div>
<div class="t" style="left:971.46px;top:810.9px;line-height:14px;color:#8c8c8c;letter-spacing:-0.11px;">area to add or edit points.</div>
<div class="a" style="left:1064.6px;top:909.6px;width:74.2px;height:23px;background:#fdfdfd;border:1px solid #4a98dc;border-bottom:2px solid #3b86c8;border-radius:4px;"></div>
<div class="t" style="left:1093.66px;top:914.6px;line-height:14px;letter-spacing:-0.6px;transform:scaleX(0.938);transform-origin:0 0;">OK</div>
<div class="a" style="left:1146.4px;top:909.6px;width:74.2px;height:23px;background:#fdfdfd;border:1px solid #dedede;border-bottom-color:#c4c4c4;border-radius:4px;"></div>
<div class="t" style="left:1166.26px;top:914.6px;line-height:14px;letter-spacing:-0.6px;transform:scaleX(0.998);transform-origin:0 0;">Cancel</div>
<svg class="a" style="left:480px;top:660px;" width="240" height="180" viewBox="480 660 240 180"><path d="M494.2,821.4 L684,691.8" stroke="#c00000" stroke-width="4.2" fill="none"/><path d="M699,680.3 L676.4,682 L689.8,700.4 Z" fill="#c00000"/></svg>
</body>
</html>
